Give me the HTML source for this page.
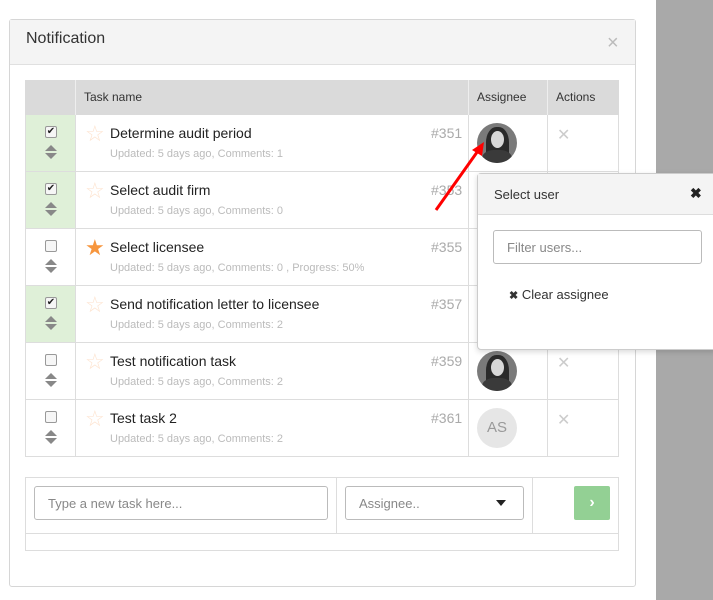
<!DOCTYPE html>
<html><head><style>
*{box-sizing:border-box;margin:0;padding:0}
body{width:713px;height:600px;background:#fff;font-family:"Liberation Sans",sans-serif;position:relative;overflow:hidden;color:#333}
.abs{position:absolute}
.gray{left:656px;top:0;width:57px;height:600px;background:#a9a9a9}
.modal{left:9px;top:19px;width:627px;height:568px;border:1px solid #d6d6d6;border-radius:3px;background:#fff}
.mh{left:0;top:0;width:625px;height:45px;background:#f4f4f4;border-bottom:1px solid #e0e0e0}
.row{left:25px;width:594px;height:57px;border:1px solid #ddd;border-top:none}
.c1{left:0;top:0;width:50px;height:56px;border-right:1px solid #ddd}
.green{background:#dff0d8}
.cb{left:19px;top:11px;width:12px;height:12px;border:1px solid #999;border-radius:2px;background:#f6f6f6;font-size:10px;line-height:10px;text-align:center;color:#222}
.up{left:19px;top:30px;width:0;height:0;border-left:6px solid transparent;border-right:6px solid transparent;border-bottom:6px solid #888}
.dn{left:19px;top:38px;width:0;height:0;border-left:6px solid transparent;border-right:6px solid transparent;border-top:6px solid #888}
.star{left:59px;top:6px;font-size:22px;color:#fde3cf}
.title{left:84px;top:10px;font-size:14px;color:#222}
.meta{left:84px;top:33px;font-size:11px;color:#bbb}
.num{left:405px;top:10px;font-size:14px;color:#aaa}
.c3{left:442px;top:0;width:1px;height:56px;background:#ddd}
.c4{left:521px;top:0;width:1px;height:56px;background:#ddd}
.av{left:451px;top:8px;width:40px;height:40px;border-radius:50%;overflow:hidden;background:#7a7a7a}
.av .f{position:absolute;left:14px;top:8px;width:13px;height:17px;border-radius:50%;background:#d8d8d8}
.av .h{position:absolute;left:9px;top:4px;width:23px;height:34px;border-radius:45% 45% 10% 10%;background:#2a2a2a}
.av .b{position:absolute;left:5px;top:27px;width:30px;height:20px;border-radius:40% 40% 0 0;background:#3a3a3a}
.x{left:531px;top:10px;font-size:16px;color:#ccc}
</style></head><body>
<div class="abs gray"></div>
<div class="abs modal">
 <div class="abs mh"><div class="abs" style="left:16px;top:10px;font-size:16px;color:#333">Notification</div><div class="abs" style="left:597px;top:12px;font-size:20px;color:#bbb">×</div></div>
</div>
<div class="abs" style="left:25px;top:80px;width:594px;height:35px;background:#dadada">
 <div class="abs" style="left:50px;top:0;width:1px;height:35px;background:#eee"></div>
 <div class="abs" style="left:59px;top:10px;font-size:12px;color:#333">Task name</div>
 <div class="abs" style="left:443px;top:0;width:1px;height:35px;background:#eee"></div>
 <div class="abs" style="left:452px;top:10px;font-size:12px;color:#333">Assignee</div>
 <div class="abs" style="left:522px;top:0;width:1px;height:35px;background:#eee"></div>
 <div class="abs" style="left:531px;top:10px;font-size:12px;color:#333">Actions</div>
</div>

<div class="abs row" style="top:115px"><div class="abs c1 green"><div class="abs cb">✔</div><div class="abs up"></div><div class="abs dn"></div></div><div class="abs star">☆</div><div class="abs title">Determine audit period</div><div class="abs meta">Updated: 5 days ago, Comments: 1</div><div class="abs num">#351</div><div class="abs c3"></div><div class="abs c4"></div><div class="abs av"><div class="h"></div><div class="f"></div><div class="b"></div></div><div class="abs x">✕</div></div>
<div class="abs row" style="top:172px"><div class="abs c1 green"><div class="abs cb">✔</div><div class="abs up"></div><div class="abs dn"></div></div><div class="abs star">☆</div><div class="abs title">Select audit firm</div><div class="abs meta">Updated: 5 days ago, Comments: 0</div><div class="abs num">#353</div><div class="abs c3"></div><div class="abs c4"></div></div>
<div class="abs row" style="top:229px"><div class="abs c1"><div class="abs cb"></div><div class="abs up"></div><div class="abs dn"></div></div><div class="abs star" style="color:#f7963e">★</div><div class="abs title">Select licensee</div><div class="abs meta">Updated: 5 days ago, Comments: 0 , Progress: 50%</div><div class="abs num">#355</div><div class="abs c3"></div><div class="abs c4"></div></div>
<div class="abs row" style="top:286px"><div class="abs c1 green"><div class="abs cb">✔</div><div class="abs up"></div><div class="abs dn"></div></div><div class="abs star">☆</div><div class="abs title">Send notification letter to licensee</div><div class="abs meta">Updated: 5 days ago, Comments: 2</div><div class="abs num">#357</div><div class="abs c3"></div><div class="abs c4"></div></div>
<div class="abs row" style="top:343px"><div class="abs c1"><div class="abs cb"></div><div class="abs up"></div><div class="abs dn"></div></div><div class="abs star">☆</div><div class="abs title">Test notification task</div><div class="abs meta">Updated: 5 days ago, Comments: 2</div><div class="abs num">#359</div><div class="abs c3"></div><div class="abs c4"></div><div class="abs av"><div class="h"></div><div class="f"></div><div class="b"></div></div><div class="abs x">✕</div></div>
<div class="abs row" style="top:400px"><div class="abs c1"><div class="abs cb"></div><div class="abs up"></div><div class="abs dn"></div></div><div class="abs star">☆</div><div class="abs title">Test task 2</div><div class="abs meta">Updated: 5 days ago, Comments: 2</div><div class="abs num">#361</div><div class="abs c3"></div><div class="abs c4"></div><div class="abs av" style="background:#e6e6e6;color:#999;font-size:15px;text-align:center;line-height:40px">AS</div><div class="abs x">✕</div></div>

<div class="abs" style="left:25px;top:477px;width:594px;height:74px;border:1px solid #ddd"></div>
<div class="abs" style="left:25px;top:533px;width:594px;height:1px;background:#ddd"></div>
<div class="abs" style="left:336px;top:477px;width:1px;height:56px;background:#ddd"></div>
<div class="abs" style="left:532px;top:477px;width:1px;height:56px;background:#ddd"></div>
<div class="abs" style="left:34px;top:486px;width:294px;height:34px;border:1px solid #bbb;border-radius:3px;padding:9px 13px;font-size:13px;color:#888">Type a new task here...</div>
<div class="abs" style="left:345px;top:486px;width:179px;height:34px;border:1px solid #bbb;border-radius:3px;padding:9px 13px;font-size:13px;color:#888">Assignee..<span class="abs" style="left:150px;top:13px;border-left:5px solid transparent;border-right:5px solid transparent;border-top:6px solid #222"></span></div>
<div class="abs" style="left:574px;top:486px;width:36px;height:34px;background:#93d094;border-radius:2px;color:#fff;font-size:16px;font-weight:bold;text-align:center;line-height:33px">›</div>

<svg class="abs" style="left:430px;top:140px" width="60" height="75"><line x1="6" y1="70" x2="50" y2="8" stroke="#f00" stroke-width="3"/><polygon points="54,2 52,16 42,10" fill="#f00"/></svg>

<div class="abs" style="left:477px;top:173px;width:240px;height:177px;border:1px solid #ccc;border-radius:4px;background:#fff;box-shadow:0 2px 6px rgba(0,0,0,.15)">
 <div class="abs" style="left:0;top:0;width:240px;height:41px;background:#f4f4f4;border-bottom:1px solid #ddd"><div class="abs" style="left:16px;top:13px;font-size:13px;color:#333">Select user</div><div class="abs" style="left:212px;top:11px;font-size:14px;font-weight:bold;color:#222">✖</div></div>
 <div class="abs" style="left:15px;top:56px;width:209px;height:34px;border:1px solid #bbb;border-radius:3px;padding:9px 13px;font-size:13px;color:#888">Filter users...</div>
 <div class="abs" style="left:31px;top:113px;font-size:13px;color:#333"><b style="font-size:11px">✖</b> Clear assignee</div>
</div>
</body></html>
